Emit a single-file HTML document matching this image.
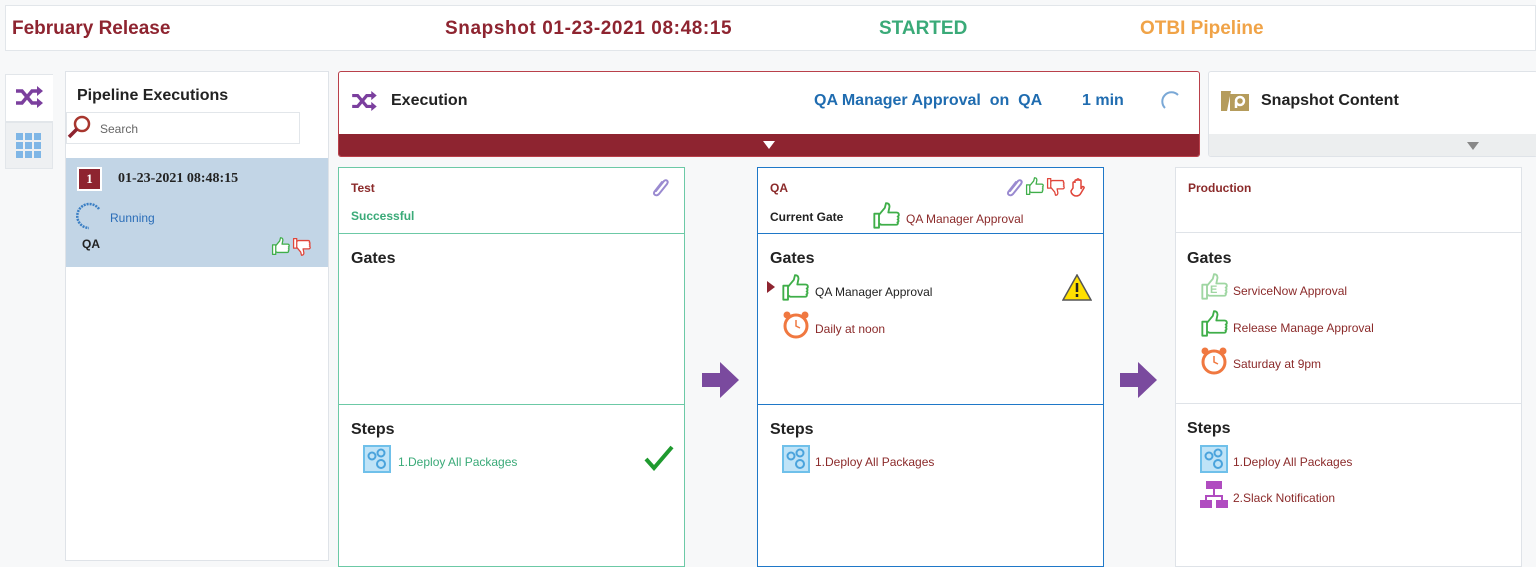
<!DOCTYPE html>
<html><head><meta charset="utf-8"><style>
*{box-sizing:border-box;margin:0;padding:0}
body{width:1536px;height:557px;overflow:hidden;background:#f7f8f9;font-family:"Liberation Sans",sans-serif;position:relative;color:#222}
.a{position:absolute}
.hdr{left:5px;top:5px;width:1531px;height:46px;background:#fff;border:1px solid #e2e6ea}
.hdr span{position:absolute;top:12px;font-weight:bold;font-size:19px}
.card{background:#fff;border:1px solid #dfe3e8}
.stage{background:#fff;position:absolute;top:167px;width:347px;height:400px}
.stage .sep{position:absolute;left:0;right:0;height:1px}
.h16{font-weight:bold;font-size:16px;color:#222}
.sm{font-size:12px}
.red{color:#8b2a2a}
</style></head><body>
<svg width="0" height="0" style="position:absolute"><defs>
<symbol id="tu" viewBox="0 0 24 24"><path d="M2 10h4v12H2zM6 11l5-6 1-4c2 0 3 1 3 3l-1 5h7c1.5 0 2 1 2 2s-1 1.5-1 1.5c1 .5 1 2 0 2.5 1 .5 1 2-.2 2.5.7.6.4 2-1 2H8l-2-1z" fill="#fff" stroke="currentColor" stroke-width="1.6" stroke-linejoin="round"/></symbol>
<symbol id="pk" viewBox="0 0 28 28"><rect x="1" y="1" width="26" height="26" fill="#bfe3f7" stroke="#6fc0ea" stroke-width="2"/><g fill="none" stroke="#4aa3dc" stroke-width="2"><circle cx="9" cy="11" r="3.5"/><circle cx="18" cy="8" r="3.5"/><circle cx="18" cy="19" r="4"/></g></symbol>
<symbol id="clk" viewBox="0 0 28 28"><circle cx="14" cy="15" r="11" fill="#fff" stroke="#f07840" stroke-width="3"/><circle cx="5" cy="4" r="3.5" fill="#f07840"/><circle cx="23" cy="4" r="3.5" fill="#f07840"/><path d="M14 9v6l4 2" stroke="#f07840" stroke-width="1.5" fill="none"/></symbol>
<symbol id="clip" viewBox="0 0 20 20"><path d="M6 14L14 4c2-2 5 0 3 3l-8 10c-3 3-7 0-4-3l7-9" fill="none" stroke="currentColor" stroke-width="2" stroke-linecap="round"/></symbol>
</defs></svg>
<div class="a hdr">
<span style="left:6px;color:#8e2430">February Release</span>
<span style="left:439px;color:#8e2430;letter-spacing:0.6px">Snapshot 01-23-2021 08:48:15</span>
<span style="left:873px;color:#3aaa78">STARTED</span>
<span style="left:1134px;color:#f0a347">OTBI Pipeline</span>
</div>
<div class="a" style="left:5px;top:74px;width:48px;height:48px;background:#fff;border:1px solid #e2e6ea;border-right:none"></div>
<svg class="a" style="left:15px;top:86px" width="28" height="22" viewBox="0 0 28 22"><path d="M1 5h6l10 12h6M1 17h6l10-12h6" stroke="#7b3f9e" stroke-width="3.5" fill="none"/><path d="M22 0l6 5-6 5zM22 12l6 5-6 5z" fill="#7b3f9e"/></svg>
<div class="a" style="left:5px;top:122px;width:48px;height:47px;background:#eef0f2;border:1px solid #e2e6ea"></div>
<svg class="a" style="left:16px;top:133px" width="26" height="26"><g fill="#7fb6e6"><rect x="0" y="0" width="7" height="7"/><rect x="9" y="0" width="7" height="7"/><rect x="18" y="0" width="7" height="7"/><rect x="0" y="9" width="7" height="7"/><rect x="9" y="9" width="7" height="7"/><rect x="18" y="9" width="7" height="7"/><rect x="0" y="18" width="7" height="7"/><rect x="9" y="18" width="7" height="7"/><rect x="18" y="18" width="7" height="7"/></g></svg>
<div class="a card" style="left:65px;top:71px;width:264px;height:490px"></div>
<div class="a h16" style="left:77px;top:87px">Pipeline Executions</div>
<div class="a" style="left:66px;top:112px;width:234px;height:32px;border:1px solid #e2e6ea;background:#fff"></div>
<svg class="a" style="left:67px;top:114px" width="26" height="26"><circle cx="15" cy="10" r="7" stroke="#a8362e" stroke-width="2.5" fill="none"/><path d="M10 15l-8 8" stroke="#8e2430" stroke-width="3.5"/></svg>
<div class="a sm" style="left:100px;top:122px;color:#666">Search</div>
<div class="a" style="left:66px;top:158px;width:262px;height:109px;background:#c2d5e6"></div>
<div class="a" style="left:77px;top:167px;width:25px;height:24px;background:#8e2430;border:2px solid #fff;color:#fff;font:bold 13px 'Liberation Serif',serif;text-align:center;line-height:20px">1</div>
<div class="a" style="left:118px;top:171px;font:bold 14px 'Liberation Serif',serif;color:#222">01-23-2021 08:48:15</div>
<svg class="a" style="left:75px;top:202px" width="28" height="28"><path d="M24 7A12 12 0 1 0 14 26" stroke="#3b7fc4" stroke-width="2.5" fill="none" stroke-dasharray="2 1"/></svg>
<div class="a sm" style="left:110px;top:211px;color:#2a6db8">Running</div>
<div class="a" style="left:82px;top:237px;font-weight:bold;font-size:12px">QA</div>
<svg class="a" style="left:271px;top:237px;color:#3fae49" width="19" height="19"><use href="#tu"/></svg>
<svg class="a" style="left:292px;top:237px;color:#e0453a;transform:scaleY(-1)" width="19" height="19"><use href="#tu"/></svg>
<div class="a" style="left:338px;top:71px;width:862px;height:86px;background:#fff;border:1px solid #b9404a;border-radius:3px;overflow:hidden">
<div class="a" style="left:0;top:62px;width:862px;height:24px;background:#8e2430"></div>
<div class="a" style="left:424px;top:69px;width:0;height:0;border-left:6px solid transparent;border-right:6px solid transparent;border-top:8px solid #fff"></div>
</div>
<svg class="a" style="left:350px;top:91px" width="28" height="20" viewBox="0 0 28 22"><path d="M1 5h6l10 12h6M1 17h6l10-12h6" stroke="#7b3f9e" stroke-width="3.5" fill="none"/><path d="M22 0l6 5-6 5zM22 12l6 5-6 5z" fill="#7b3f9e"/></svg>
<div class="a" style="left:391px;top:92px;font-weight:bold;font-size:16px">Execution</div>
<div class="a" style="left:814px;top:92px;font-weight:bold;font-size:16px;color:#1f6cb0">QA Manager Approval&nbsp; on&nbsp; QA</div>
<div class="a" style="left:1082px;top:92px;font-weight:bold;font-size:16px;color:#1f6cb0">1 min</div>
<svg class="a" style="left:1160px;top:90px" width="22" height="22"><path d="M18 5A9 9 0 0 0 5 18" stroke="#7aa8d6" stroke-width="2" fill="none"/></svg>
<div class="a" style="left:1208px;top:71px;width:330px;height:86px;background:#fff;border:1px solid #dfe3e8;border-radius:3px;overflow:hidden">
<div class="a" style="left:0;top:62px;width:330px;height:24px;background:#eceeef"></div>
<div class="a" style="left:258px;top:70px;border-left:6px solid transparent;border-right:6px solid transparent;border-top:8px solid #888"></div>
</div>
<svg class="a" style="left:1221px;top:90px" width="28" height="22"><path d="M0 1h10l-4 20H0z" fill="#b59c5c"/><rect x="9" y="4" width="19" height="17" fill="#b59c5c"/><circle cx="19" cy="11" r="4" stroke="#fff" stroke-width="2.5" fill="none"/><path d="M15 12v6" stroke="#fff" stroke-width="2.5"/></svg>
<div class="a" style="left:1261px;top:92px;font-weight:bold;font-size:16px">Snapshot Content</div>
<!-- Test -->
<div class="stage" style="left:338px;border:1px solid #6cc9a6">
<div class="sep" style="top:65px;background:#6cc9a6"></div>
<div class="sep" style="top:236px;background:#6cc9a6"></div>
<div class="a red" style="left:12px;top:13px;font-weight:bold;font-size:12px">Test</div>
<div class="a" style="left:12px;top:41px;font-weight:bold;font-size:12px;color:#3aaa78">Successful</div>
<svg class="a" style="left:311px;top:9px;color:#9a8ad0" width="20" height="20"><use href="#clip"/></svg>
<div class="a h16" style="left:12px;top:82px">Gates</div>
<div class="a h16" style="left:12px;top:253px">Steps</div>
<svg class="a" style="left:24px;top:277px" width="28" height="28"><use href="#pk"/></svg>
<div class="a sm" style="left:59px;top:287px;color:#3aaa78">1.Deploy All Packages</div>
<svg class="a" style="left:305px;top:277px" width="30" height="26"><path d="M2 14l8 9L28 2" stroke="#1f9a2f" stroke-width="4" fill="none"/></svg>
</div>
<!-- QA -->
<div class="stage" style="left:757px;border:1px solid #1f78c8">
<div class="sep" style="top:65px;background:#1f78c8"></div>
<div class="sep" style="top:236px;background:#1f78c8"></div>
<div class="a red" style="left:12px;top:13px;font-weight:bold;font-size:12px">QA</div>
<div class="a" style="left:12px;top:42px;font-weight:bold;font-size:12px">Current Gate</div>
<svg class="a" style="left:114px;top:34px;color:#3fae49" width="28" height="28"><use href="#tu"/></svg>
<div class="a sm red" style="left:148px;top:44px">QA Manager Approval</div>
<svg class="a" style="left:246px;top:9px;color:#9a8ad0" width="20" height="20"><use href="#clip"/></svg>
<svg class="a" style="left:267px;top:9px;color:#3fae49" width="19" height="19"><use href="#tu"/></svg>
<svg class="a" style="left:288px;top:9px;color:#e0453a;transform:scaleY(-1)" width="19" height="19"><use href="#tu"/></svg>
<svg class="a" style="left:312px;top:9px" width="16" height="20"><path d="M3 11V6c0-1.5 2-1.5 2 0V4c0-1.5 2-1.5 2 0V3c0-1.5 2-1.5 2 0v1c0-1.5 2-1.5 2 0v8l1-2c1-1 2.5 0 2 1l-3 5c-1 2-3 3-5 3s-5-2-5-5z" fill="#fff" stroke="#e0453a" stroke-width="1.5"/></svg>
<div class="a h16" style="left:12px;top:82px">Gates</div>
<div class="a" style="left:9px;top:113px;border-top:6px solid transparent;border-bottom:6px solid transparent;border-left:8px solid #8e2430"></div>
<svg class="a" style="left:23px;top:106px;color:#3fae49" width="28" height="28"><use href="#tu"/></svg>
<div class="a sm" style="left:57px;top:117px">QA Manager Approval</div>
<svg class="a" style="left:304px;top:106px" width="30" height="27"><path d="M15 1L29 26H1z" fill="#ffe000" stroke="#555" stroke-width="1.5"/><path d="M15 9v9M15 20v3" stroke="#222" stroke-width="2.5"/></svg>
<svg class="a" style="left:24px;top:143px" width="28" height="28"><use href="#clk"/></svg>
<div class="a sm red" style="left:57px;top:154px">Daily at noon</div>
<div class="a h16" style="left:12px;top:253px">Steps</div>
<svg class="a" style="left:24px;top:277px" width="28" height="28"><use href="#pk"/></svg>
<div class="a sm red" style="left:57px;top:287px">1.Deploy All Packages</div>
</div>
<!-- Production -->
<div class="stage" style="left:1175px;border:1px solid #dfe3e8">
<div class="sep" style="top:64px;background:#dfe3e8"></div>
<div class="sep" style="top:235px;background:#dfe3e8"></div>
<div class="a red" style="left:12px;top:13px;font-weight:bold;font-size:12px">Production</div>
<div class="a h16" style="left:11px;top:82px">Gates</div>
<svg class="a" style="left:24px;top:105px;color:#9fd6a2" width="28" height="28"><use href="#tu"/></svg>
<div class="a" style="left:34px;top:116px;font-weight:bold;font-size:11px;color:#9fd6a2">E</div>
<div class="a sm red" style="left:57px;top:116px">ServiceNow Approval</div>
<svg class="a" style="left:24px;top:142px;color:#3fae49" width="28" height="28"><use href="#tu"/></svg>
<div class="a sm red" style="left:57px;top:153px">Release Manage Approval</div>
<svg class="a" style="left:24px;top:179px" width="28" height="28"><use href="#clk"/></svg>
<div class="a sm red" style="left:57px;top:189px">Saturday at 9pm</div>
<div class="a h16" style="left:11px;top:252px">Steps</div>
<svg class="a" style="left:24px;top:277px" width="28" height="28"><use href="#pk"/></svg>
<div class="a sm red" style="left:57px;top:287px">1.Deploy All Packages</div>
<svg class="a" style="left:24px;top:313px" width="28" height="28"><g fill="#b04cc0"><rect x="6" y="0" width="16" height="8"/><rect x="0" y="19" width="12" height="8"/><rect x="16" y="19" width="12" height="8"/><path d="M13 8h2v6h8v5h-2v-3H7v3H5v-5h8z"/></g></svg>
<div class="a sm red" style="left:57px;top:323px">2.Slack Notification</div>
</div>
<svg class="a" style="left:702px;top:362px" width="38" height="36"><path d="M0 11h18V0l19 18-19 18V25H0z" fill="#7a4a9e"/></svg>
<svg class="a" style="left:1120px;top:362px" width="38" height="36"><path d="M0 11h18V0l19 18-19 18V25H0z" fill="#7a4a9e"/></svg>
</body></html>
